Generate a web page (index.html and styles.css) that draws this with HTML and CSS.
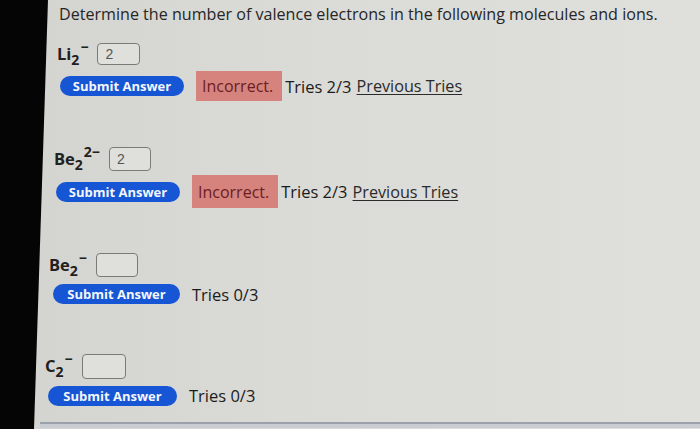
FILE: index.html
```html
<!DOCTYPE html>
<html lang="en">
<head>
<meta charset="utf-8">
<title>Valence electrons</title>
<link rel="stylesheet" href="styles.css">
</head>
<body>
<div class="screen">
  <p class="prompt">Determine the number of valence electrons in the following molecules and ions.</p>

  <section class="part p1">
    <div class="ask">
      <span class="formula">Li<sub>2</sub><sup>−</sup></span>
      <span class="box">2</span>
    </div>
    <div class="result">
      <span class="submit">Submit Answer</span>
      <span class="verdict">Incorrect.</span>
      <span class="tries">Tries 2/3</span>
      <a class="prev">Previous Tries</a>
    </div>
  </section>

  <section class="part p2">
    <div class="ask">
      <span class="formula">Be<sub>2</sub><sup>2−</sup></span>
      <span class="box">2</span>
    </div>
    <div class="result">
      <span class="submit">Submit Answer</span>
      <span class="verdict">Incorrect.</span>
      <span class="tries">Tries 2/3</span>
      <a class="prev">Previous Tries</a>
    </div>
  </section>

  <section class="part p3">
    <div class="ask">
      <span class="formula">Be<sub>2</sub><sup>−</sup></span>
      <span class="box"></span>
    </div>
    <div class="result">
      <span class="submit">Submit Answer</span>
      <span class="tries">Tries 0/3</span>
    </div>
  </section>

  <section class="part p4">
    <div class="ask">
      <span class="formula">C<sub>2</sub><sup>−</sup></span>
      <span class="box"></span>
    </div>
    <div class="result">
      <span class="submit">Submit Answer</span>
      <span class="tries">Tries 0/3</span>
    </div>
  </section>

  <div class="rule"></div>
</div>
</body>
</html>
```

FILE: styles.css
```css
html, body {
  margin: 0;
  padding: 0;
  background: #050505;
  width: 700px;
  height: 429px;
  overflow: hidden;
}

.screen {
  width: 700px;
  height: 429px;
  box-sizing: border-box;
  padding-top: 3px;
  background: linear-gradient(90deg, #d3d3cf 0%, #dadad6 40%, #dfe0dc 100%);
  clip-path: polygon(48px 0, 100% 0, 100% 100%, 34px 100%);
  font-family: "Open Sans", "Noto Sans", sans-serif;
  color: #1d1d1d;
  display: flex;
  flex-direction: column;
}

.prompt {
  margin: 0 0 0 59px;
  font-size: 16.1px;
  line-height: 23px;
  color: #262626;
}

.part {
  display: flex;
  flex-direction: column;
}

.ask {
  display: flex;
  align-items: center;
  gap: 9px;
}

.formula {
  font-weight: 700;
  font-size: 16.5px;
  color: #202020;
  line-height: 1;
}

.formula sub {
  font-size: 14px;
  vertical-align: -5px;
  line-height: 0;
}

.formula sup {
  font-size: 14px;
  vertical-align: 8px;
  line-height: 0;
  margin-left: 1px;
}

.box {
  box-sizing: border-box;
  width: 42px;
  height: 24px;
  border: 1.5px solid #7a7a78;
  border-radius: 4px;
  background: #dfdfdb;
  font-family: "Liberation Sans", sans-serif;
  font-size: 14px;
  color: #555;
  padding-left: 7px;
  display: flex;
  align-items: center;
}

.result {
  display: flex;
  align-items: center;
}

.submit {
  box-sizing: border-box;
  width: 124px;
  height: 20px;
  border-radius: 10px;
  background: #1656d4;
  color: #f4f6fb;
  font-weight: 700;
  font-size: 13px;
  display: flex;
  align-items: center;
  justify-content: center;
  margin-right: 12px;
}

.verdict {
  background: #d6837e;
  color: #6b1d21;
  font-size: 16px;
  display: flex;
  align-items: center;
  padding: 0 9px 0 6px;
  align-self: stretch;
  margin-right: 3px;
}

.tries {
  font-size: 16.5px;
  color: #1c1c1c;
  margin-right: 5px;
}

.prev {
  font-size: 16.2px;
  color: #2a2a2a;
  text-decoration: underline;
  text-underline-offset: 2px;
}

/* part positions (photo is slightly skewed, so each block sits a little further left) */
.p1 { margin: 17px 0 0 57px; }
.p1 .box { width: 43px; height: 22px; }
.p1 .result { margin: 6px 0 0 3px; height: 30px; }

.p2 { margin: 46px 0 0 54px; }
.p2 .result { margin: 4px 0 0 2px; height: 33px; }

.p3 { margin: 45px 0 0 49px; }
.p3 .result { margin: 7px 0 0 4px; height: 20px; }
.p3 .submit { width: 127px; }

.p4 { margin: 50px 0 0 45px; }
.p4 .box { width: 44px; height: 25px; }
.p4 .result { margin: 6px 0 0 3px; height: 21px; }
.p4 .submit { width: 129px; }

.rule {
  margin: 16px 0 0 40px;
  height: 2px;
  background: #9aa1aa;
  border-bottom: 4px solid #c9cdd3;
}
```
